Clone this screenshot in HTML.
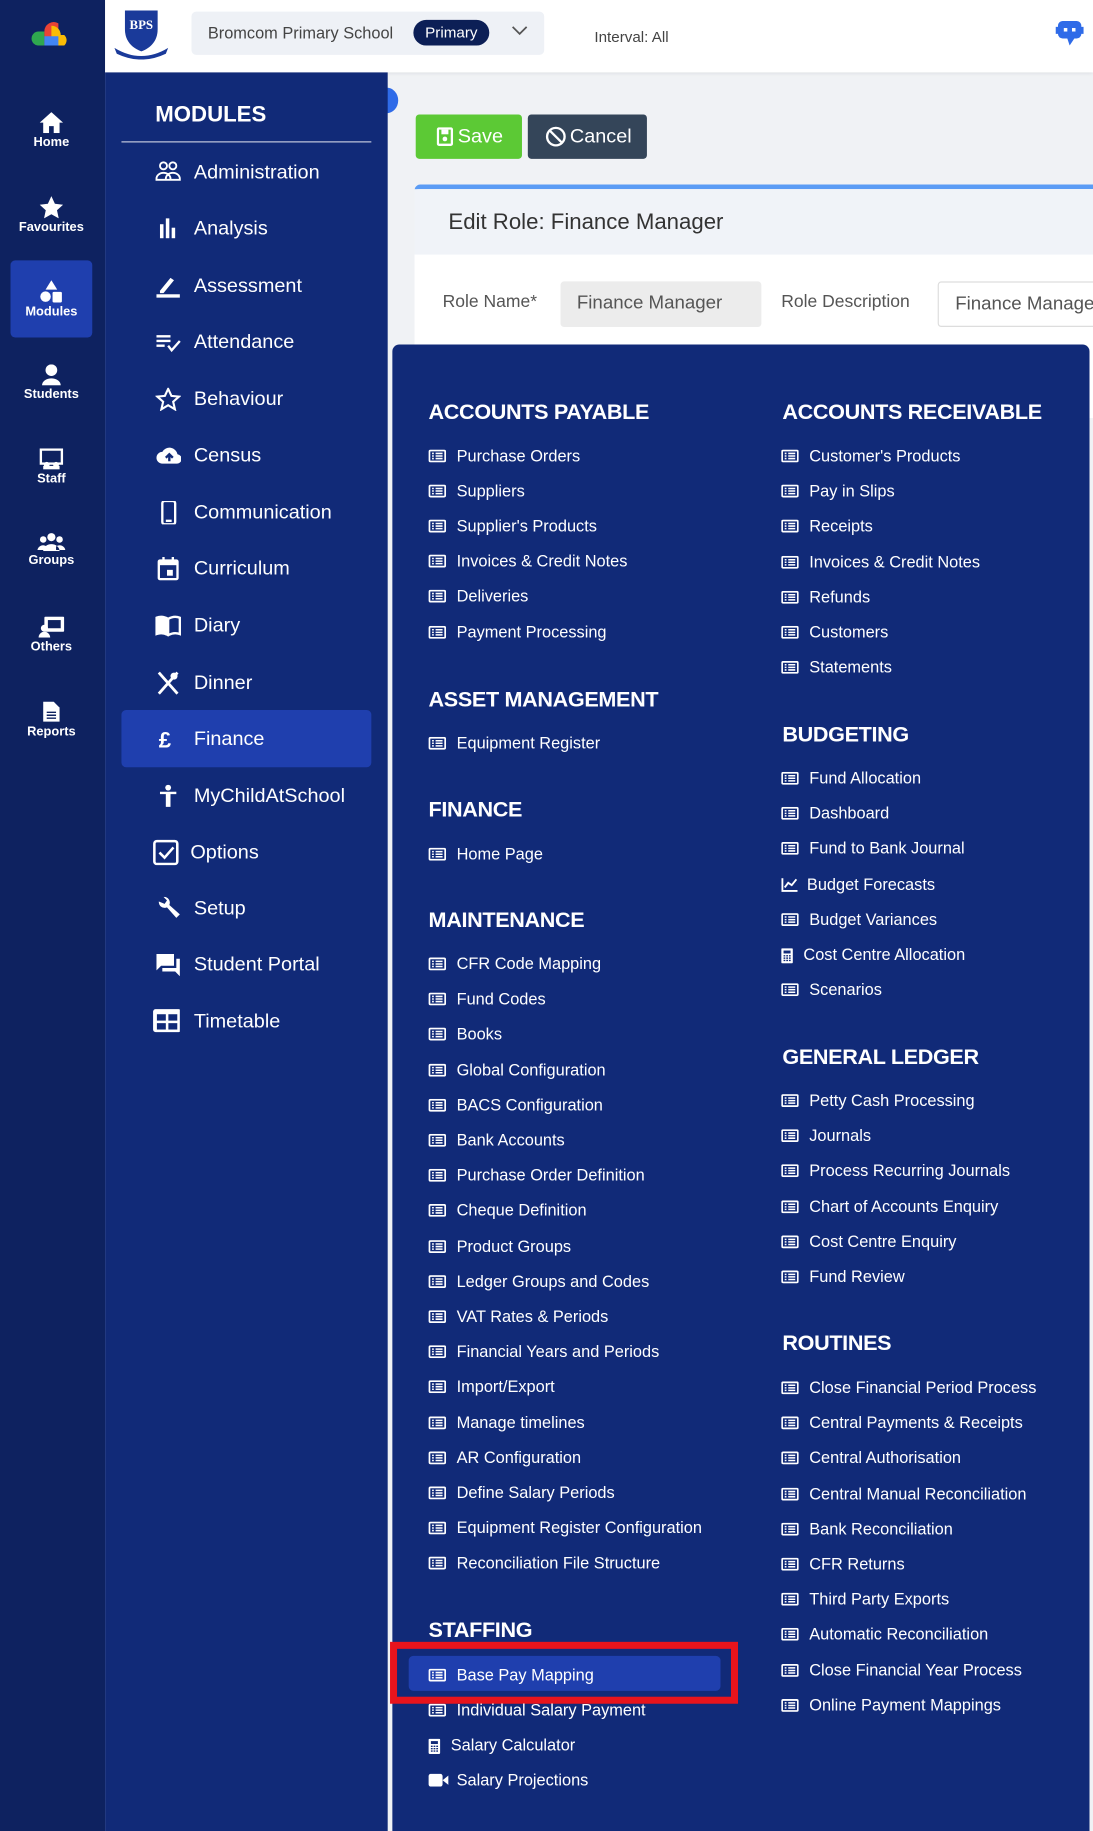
<!DOCTYPE html>
<html><head><meta charset="utf-8">
<style>
*{box-sizing:border-box;margin:0;padding:0}
html,body{width:1093px;height:1831px;overflow:hidden;background:#f0f2f5;font-family:"Liberation Sans",Arial,sans-serif}
#w{position:absolute;left:0;top:0;width:936px;height:1568px;transform:scale(1.16774);transform-origin:0 0;background:#f0f2f5}
.a{position:absolute}
#side{left:0;top:0;width:90px;height:1568px;background:#0e2260}
.si{position:absolute;left:0;width:88px;text-align:center;color:#fff;font-size:11px;font-weight:bold}
.si svg{display:block;margin:0 auto 2px}
#top{left:90px;top:0;width:846px;height:62px;background:#fff;box-shadow:0 1px 3px rgba(0,0,0,.08)}
#mods{left:90px;top:62px;width:242px;height:1506px;background:#112a78}
.mi{position:absolute;left:43px;color:#fff;font-size:17px;height:24px;line-height:24px;white-space:nowrap}
.mi .ic{position:absolute;left:0;top:2px;width:22px;height:20px}
.mi span{position:absolute;left:33px}
#dd{left:336px;top:295px;width:597px;height:1273px;background:#112a78;border-radius:6px 6px 0 0}
.h{position:absolute;color:#fff;font-size:18.5px;font-weight:bold;white-space:nowrap;letter-spacing:-0.3px}
.it{position:absolute;color:#fff;font-size:14px;height:20px;line-height:20px;white-space:nowrap}
.it svg{position:absolute;left:0;top:5px}
.it span{position:absolute;left:24px}
</style></head><body><div id="w">

<div id="side" class="a">
 <svg class="a" style="left:27px;top:17px" width="34" height="22" viewBox="0 0 34 22"><path d="M6 22a6 6 0 0 1 0-12h5V22z" fill="#2fa84f"/><path d="M11 10a8 8 0 0 1 12-7V22H11z" fill="#ea4335"/><path d="M17 5a8 8 0 0 1 8 8h3a6 6 0 0 1 0 9H17z" fill="#fbbc05"/><path d="M11 14h12v8H11z" fill="#4285f4"/></svg>
 <div class="a" style="left:9px;top:223px;width:70px;height:66px;background:#1f3fae;border-radius:4px"></div>
 <div class="si" style="top:96px"><svg width="20" height="18" viewBox="0 0 20 18"><path d="M10 0L0 9h3v9h5v-6h4v6h5V9h3z" fill="#fff"/></svg>Home</div>
 <div class="si" style="top:168px"><svg width="20" height="19" viewBox="0 0 20 19"><path d="M10 0l3 6.5 7 .8-5.2 4.7 1.5 7L10 15.5 3.7 19l1.5-7L0 7.3l7-.8z" fill="#fff"/></svg>Favourites</div>
 <div class="si" style="top:240px"><svg width="20" height="19" viewBox="0 0 20 19"><path d="M10 0l5 8H5z" fill="#fff"/><circle cx="5" cy="14" r="4.5" fill="#fff"/><rect x="11" y="10" width="8" height="9" rx="1" fill="#fff"/></svg>Modules</div>
 <div class="si" style="top:312px"><svg width="18" height="18" viewBox="0 0 18 18"><circle cx="9" cy="5" r="5" fill="#fff"/><path d="M1 18a8 6 0 0 1 16 0z" fill="#fff"/></svg>Students</div>
 <div class="si" style="top:384px"><svg width="22" height="18" viewBox="0 0 22 18"><rect x="2" y="1" width="18" height="12" fill="none" stroke="#fff" stroke-width="2"/><circle cx="7" cy="14" r="2.5" fill="#fff"/><circle cx="15" cy="14" r="2.5" fill="#fff"/><rect x="4" y="15" width="14" height="3" fill="#fff"/></svg>Staff</div>
 <div class="si" style="top:456px"><svg width="24" height="16" viewBox="0 0 24 16"><circle cx="12" cy="4" r="3.5" fill="#fff"/><circle cx="5" cy="6" r="2.8" fill="#fff"/><circle cx="19" cy="6" r="2.8" fill="#fff"/><path d="M5 16a7 6 0 0 1 14 0zM0 15a5 5 0 0 1 8-3v3zM24 15a5 5 0 0 0-8-3v3z" fill="#fff"/></svg>Groups</div>
 <div class="si" style="top:528px"><svg width="22" height="18" viewBox="0 0 22 18"><rect x="5" y="0" width="17" height="13" rx="1" fill="#fff"/><rect x="8" y="3" width="11" height="7" fill="#0e2260"/><circle cx="5" cy="10" r="3" fill="#fff"/><path d="M0 18a5 5 0 0 1 10 0z" fill="#fff"/></svg>Others</div>
 <div class="si" style="top:600px"><svg width="16" height="19" viewBox="0 0 16 19"><path d="M1 1h9l5 5v12H1z" fill="#fff"/><path d="M4 10h8M4 12.5h8M4 15h8" stroke="#0e2260" stroke-width="1.2"/></svg>Reports</div>
</div>

<div id="top" class="a">
 <svg class="a" style="left:7px;top:7px" width="48" height="44" viewBox="0 0 48 44"><path d="M10 2h28v16c0 10-6 16-14 19C16 34 10 28 10 18z" fill="#1a3a9a"/><text x="24" y="18" font-family="Liberation Serif" font-size="11" fill="#fff" text-anchor="middle" font-weight="bold">BPS</text><path d="M1 34q23 14 46 0l-2 5q-21 10-42 0z" fill="#1a3a9a"/></svg>
 <div class="a" style="left:74px;top:10px;width:302px;height:37px;background:#eef1f6;border-radius:4px"></div>
 <div class="a" style="left:88px;top:20px;font-size:14px;color:#444">Bromcom Primary School</div>
 <div class="a" style="left:264px;top:17px;width:65px;height:22px;border-radius:11px;background:#0c1f56;color:#fff;font-size:13px;line-height:22px;text-align:center">Primary</div>
 <svg class="a" style="left:348px;top:21px" width="14" height="10" viewBox="0 0 14 10"><path d="M1 2l6 6 6-6" fill="none" stroke="#555" stroke-width="1.5"/></svg>
 <div class="a" style="left:419px;top:24px;font-size:13px;color:#444">Interval: All</div>
 <svg class="a" style="left:814px;top:16px" width="24" height="26" viewBox="0 0 24 26"><rect x="2" y="2" width="20" height="15" rx="4" fill="#2f6be8"/><rect x="0" y="7" width="3" height="6" fill="#2f6be8"/><rect x="21" y="7" width="3" height="6" fill="#2f6be8"/><path d="M10 17h6l-4 6z" fill="#2f6be8"/><rect x="7" y="8" width="3" height="3" fill="#fff"/><rect x="14" y="8" width="3" height="3" fill="#fff"/></svg>
</div>

<div class="a" style="left:321px;top:75px;width:20px;height:22px;border-radius:50%;background:#2f6be8"></div>
<div class="a" style="left:356px;top:98px;width:91px;height:38px;background:#5cc935;border-radius:3px;color:#fff;font-size:17px;line-height:38px"><svg style="position:absolute;left:18px;top:11px" width="14" height="16" viewBox="0 0 14 16"><rect x="1" y="1" width="12" height="14" rx="1" fill="none" stroke="#fff" stroke-width="2"/><rect x="4" y="2" width="6" height="4" fill="#fff"/><circle cx="7" cy="10" r="2" fill="#fff"/></svg><span style="position:absolute;left:36px">Save</span></div>
<div class="a" style="left:452px;top:98px;width:102px;height:38px;background:#344559;border-radius:3px;color:#fff;font-size:17px;line-height:38px"><svg style="position:absolute;left:15px;top:10px" width="18" height="18" viewBox="0 0 18 18"><circle cx="9" cy="9" r="7.5" fill="none" stroke="#fff" stroke-width="2"/><path d="M4 4l10 10" stroke="#fff" stroke-width="2"/></svg><span style="position:absolute;left:36px">Cancel</span></div>

<div class="a" style="left:355px;top:158px;width:581px;height:200px;background:#fff;border-top:4px solid #5b9cf5;border-radius:5px 0 0 0"></div>
<div class="a" style="left:355px;top:162px;width:581px;height:56px;background:#f0f3f8"></div>
<div class="a" style="left:384px;top:180px;font-size:19px;color:#333">Edit Role: Finance Manager</div>
<div class="a" style="left:379px;top:250px;font-size:15px;color:#555">Role Name*</div>
<div class="a" style="left:480px;top:241px;width:172px;height:39px;background:#ececec;border-radius:3px;font-size:16px;color:#555;padding:10px 0 0 14px">Finance Manager</div>
<div class="a" style="left:669px;top:250px;font-size:15px;color:#555">Role Description</div>
<div class="a" style="left:803px;top:241px;width:140px;height:39px;background:#fff;border:1px solid #ddd;border-radius:3px;font-size:16px;color:#555;padding:10px 0 0 14px;white-space:nowrap;overflow:hidden">Finance Manager</div>

<div id="mods" class="a">
 <div class="a" style="left:43px;top:26px;color:#fff;font-size:19px;font-weight:bold">MODULES</div>
 <div class="a" style="left:14px;top:59px;width:214px;height:1px;background:#c8cde0"></div>
 <div class="a" style="left:14px;top:546px;width:214px;height:49px;background:#1f3fae;border-radius:4px"></div>
</div>
<div id="mlist"></div>

<div id="dd" class="a"></div>
<div class="a" style="left:350px;top:1418px;width:267px;height:30px;background:#1f3fae;border-radius:4px"></div>
<div class="a" style="left:334px;top:1406px;width:298px;height:53px;border:6px solid #e8141c"></div>

<div id="items"></div>
</div>
<script>
var L='<svg width="15" height="11" viewBox="0 0 15 11"><rect x=".75" y=".75" width="13.5" height="9.5" rx="1" fill="none" stroke="#fff" stroke-width="1.5"/><path d="M3 3.3h1.5M3 5.5h1.5M3 7.7h1.5M6 3.3h6M6 5.5h6M6 7.7h6" stroke="#fff" stroke-width="1.3"/></svg>';
var h='';
function hd(x,y,t){h+='<div class="h" style="left:'+x+'px;top:'+(y-10)+'px">'+t+'</div>';}
function it(x,y,t,ic,off){h+='<div class="it" style="left:'+x+'px;top:'+(y-10)+'px">'+(ic||L)+'<span'+(off!=null?' style="left:'+off+'px"':'')+'>'+t+'</span></div>';}
hd(367,352,'ACCOUNTS PAYABLE');
['Purchase Orders','Suppliers',"Supplier's Products",'Invoices &amp; Credit Notes','Deliveries','Payment Processing'].forEach(function(t,i){it(367,390+i*30.1,t)});
hd(367,598,'ASSET MANAGEMENT');it(367,636,'Equipment Register');
hd(367,692,'FINANCE');it(367,731,'Home Page');
hd(367,787,'MAINTENANCE');
['CFR Code Mapping','Fund Codes','Books','Global Configuration','BACS Configuration','Bank Accounts','Purchase Order Definition','Cheque Definition','Product Groups','Ledger Groups and Codes','VAT Rates &amp; Periods','Financial Years and Periods','Import/Export','Manage timelines','AR Configuration','Define Salary Periods','Equipment Register Configuration','Reconciliation File Structure'].forEach(function(t,i){it(367,825+i*30.2,t)});
hd(367,1395,'STAFFING');
it(367,1434,'Base Pay Mapping');it(367,1464,'Individual Salary Payment');
it(367,1494,'Salary Calculator','<svg width="10" height="13" viewBox="0 0 10 13"><rect width="10" height="13" rx="1" fill="#fff"/><rect x="2" y="2" width="6" height="2.5" fill="#112a78"/><path d="M2 6.5h1.5M4.3 6.5h1.5M6.6 6.5h1.5M2 8.5h1.5M4.3 8.5h1.5M6.6 8.5h1.5M2 10.5h1.5M4.3 10.5h1.5M6.6 10.5h1.5" stroke="#112a78" stroke-width="1.2"/></svg>',19);
it(367,1524,'Salary Projections','<svg width="17" height="11" viewBox="0 0 17 11"><rect width="12" height="11" rx="2" fill="#fff"/><path d="M12 5.5l5-4v8z" fill="#fff"/></svg>');
hd(670,352,'ACCOUNTS RECEIVABLE');
["Customer's Products",'Pay in Slips','Receipts','Invoices &amp; Credit Notes','Refunds','Customers','Statements'].forEach(function(t,i){it(669,390+i*30.2,t)});
hd(670,628,'BUDGETING');
it(669,666,'Fund Allocation');it(669,696,'Dashboard');it(669,726,'Fund to Bank Journal');
it(669,757,'Budget Forecasts','<svg width="14" height="12" viewBox="0 0 14 12"><path d="M1 0v11h13" fill="none" stroke="#fff" stroke-width="1.6"/><path d="M3 8l3-4 3 2 4-5" fill="none" stroke="#fff" stroke-width="1.6"/></svg>',22);
it(669,787,'Budget Variances');
it(669,817,'Cost Centre Allocation','<svg width="10" height="13" viewBox="0 0 10 13"><rect width="10" height="13" rx="1" fill="#fff"/><rect x="2" y="2" width="6" height="2.5" fill="#112a78"/><path d="M2 6.5h1.5M4.3 6.5h1.5M6.6 6.5h1.5M2 8.5h1.5M4.3 8.5h1.5M6.6 8.5h1.5M2 10.5h1.5M4.3 10.5h1.5M6.6 10.5h1.5" stroke="#112a78" stroke-width="1.2"/></svg>',19);
it(669,847,'Scenarios');
hd(670,904,'GENERAL LEDGER');
['Petty Cash Processing','Journals','Process Recurring Journals','Chart of Accounts Enquiry','Cost Centre Enquiry','Fund Review'].forEach(function(t,i){it(669,942+i*30.2,t)});
hd(670,1149,'ROUTINES');
['Close Financial Period Process','Central Payments &amp; Receipts','Central Authorisation','Central Manual Reconciliation','Bank Reconciliation','CFR Returns','Third Party Exports','Automatic Reconciliation','Close Financial Year Process','Online Payment Mappings'].forEach(function(t,i){it(669,1188+i*30.2,t)});
document.getElementById('items').innerHTML=h;
var m='';
var mods=[['Administration','<svg viewBox="0 0 22 20" class="ic"><circle cx="7" cy="4" r="3" fill="none" stroke="#fff" stroke-width="1.6"/><circle cx="15" cy="4" r="3" fill="none" stroke="#fff" stroke-width="1.6"/><path d="M1 15a6 5 0 0 1 12 0v1H1zM9 15a6 5 0 0 1 12 0v1H9z" fill="none" stroke="#fff" stroke-width="1.6"/></svg>'],
['Analysis','<svg viewBox="0 0 22 20" class="ic"><rect x="4" y="6" width="3" height="12" fill="#fff"/><rect x="9" y="1" width="3" height="17" fill="#fff"/><rect x="14" y="9" width="3" height="9" fill="#fff"/></svg>'],
['Assessment','<svg viewBox="0 0 22 20" class="ic"><path d="M4 14l9-11 3 2-9 11H4z" fill="#fff"/><rect x="1" y="17" width="20" height="3" fill="#fff"/></svg>'],
['Attendance','<svg viewBox="0 0 22 20" class="ic"><path d="M1 5h12M1 9h12M1 13h7M11 13l3 4 7-8" fill="none" stroke="#fff" stroke-width="2"/></svg>'],
['Behaviour','<svg viewBox="0 0 22 20" class="ic"><path d="M11 1l2.8 6 6.5.6-5 4.4 1.5 6.5L11 15l-5.8 3.5 1.5-6.5-5-4.4 6.5-.6z" fill="none" stroke="#fff" stroke-width="1.8"/></svg>'],
['Census','<svg viewBox="0 0 22 20" class="ic"><path d="M6 17a5 5 0 0 1 0-10 7 7 0 0 1 13 2 4 4 0 0 1-1 8z" fill="#fff"/><path d="M12 15V9M9 12l3-3 3 3" stroke="#112a78" stroke-width="2" fill="none"/></svg>'],
['Communication','<svg viewBox="0 0 22 20" class="ic"><rect x="6" y="0" width="11" height="20" rx="2" fill="none" stroke="#fff" stroke-width="2"/><rect x="9" y="16" width="5" height="2" fill="#fff"/></svg>'],
['Curriculum','<svg viewBox="0 0 22 20" class="ic"><rect x="3" y="3" width="16" height="16" rx="1" fill="none" stroke="#fff" stroke-width="2"/><rect x="3" y="3" width="16" height="4" fill="#fff"/><rect x="6" y="0" width="2" height="4" fill="#fff"/><rect x="14" y="0" width="2" height="4" fill="#fff"/><rect x="10" y="11" width="5" height="5" fill="#fff"/></svg>'],
['Diary','<svg viewBox="0 0 22 20" class="ic"><path d="M1 3q5-2 10 1 5-3 10-1v14q-5-2-10 1-5-3-10-1z" fill="none" stroke="#fff" stroke-width="2"/><path d="M11 4v14" stroke="#fff" stroke-width="2"/><path d="M1 3q5-2 10 1v14q-5-3-10-1z" fill="#fff"/></svg>'],
['Dinner','<svg viewBox="0 0 22 20" class="ic"><path d="M3 1l16 18M19 1L3 19" stroke="#fff" stroke-width="2.4"/><circle cx="16" cy="4" r="3" fill="#fff"/></svg>'],
['Finance','<svg viewBox="0 0 22 20" class="ic"><text x="3" y="17" font-family="Liberation Sans" font-weight="bold" font-size="19" fill="#fff">£</text></svg>'],
['MyChildAtSchool','<svg viewBox="0 0 22 20" class="ic"><circle cx="11" cy="2.5" r="2.5" fill="#fff"/><path d="M4 6h14v2h-5v11h-2v-6h-0v6H9V8H4z" fill="#fff"/></svg>'],
['Options','<svg viewBox="0 0 22 20" class="ic" style="left:-3px;top:-1px;width:24px;height:24px"><rect x="2" y="2" width="18" height="18" rx="2" fill="none" stroke="#fff" stroke-width="2"/><path d="M6 11l4 4 7-8" fill="none" stroke="#fff" stroke-width="2"/></svg>'],
['Setup','<svg viewBox="0 0 22 20" class="ic"><path d="M3 4a5 5 0 0 0 7 5l8 9 3-3-9-8a5 5 0 0 0-5-7l3 3-2 3z" fill="#fff"/></svg>'],
['Student Portal','<svg viewBox="0 0 22 20" class="ic"><path d="M1 1h15v10H5l-4 4z" fill="#fff"/><path d="M18 5h3v15l-4-4H6v-3h12z" fill="#fff"/></svg>'],
['Timetable','<svg viewBox="0 0 22 20" class="ic" style="left:-3px;top:0;width:24px;height:22px"><rect x="1" y="1" width="22" height="18" rx="2" fill="#fff"/><rect x="4" y="5" width="7" height="5" fill="#112a78"/><rect x="13" y="5" width="7" height="5" fill="#112a78"/><rect x="4" y="12" width="7" height="5" fill="#112a78"/><rect x="13" y="12" width="7" height="5" fill="#112a78"/></svg>']];
var ys=[148,196,245,293,342,390,439,487,536,585,633,682,730,778,826,875];
mods.forEach(function(d,i){m+='<div class="mi" style="top:'+(ys[i]-12-62)+'px">'+d[1]+'<span'+(d[0]=='Options'?' style="left:30px"':'')+'>'+d[0]+'</span></div>';});
document.getElementById('mods').insertAdjacentHTML('beforeend',m);
</script>
</body></html>
